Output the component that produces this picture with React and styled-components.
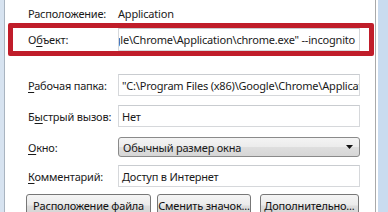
import React from "react";
import styled, { createGlobalStyle } from "styled-components";

const GlobalStyle = createGlobalStyle`
   html, body {
      margin: 0;
      padding: 0;
      background: #ffffff;
   }
   body {
      font-family: "Segoe UI", "Noto Sans", "DejaVu Sans", sans-serif;
      font-size: 11px;
      letter-spacing: -0.2px;
      color: #1a1a1a;
   }
`;

export default function App() {
   return (
      <>
         <GlobalStyle />
         <Window>
            <LeftEdge />
            <Panel>
               <Row $height={22} $top={2}>
                  <Label>Расположение:</Label>
                  <PlainValue>Application</PlainValue>
               </Row>

               <Highlight>
                  <Row $height={23}>
                     <Label>
                        О<u>б</u>ъект:
                     </Label>
                     <Field $alignEnd>
                        <span>"C:\Program Files (x86)\Google\Chrome\Application\chrome.exe" --incognito</span>
                     </Field>
                  </Row>
               </Highlight>

               <Row $height={22} $top={18}>
                  <Label>
                     <u>Р</u>абочая папка:
                  </Label>
                  <Field>
                     <span>"C:\Program Files (x86)\Google\Chrome\Application"</span>
                  </Field>
               </Row>

               <Row $height={22} $top={9}>
                  <Label>
                     Б<u>ы</u>стрый вызов:
                  </Label>
                  <Field>
                     <span>Нет</span>
                  </Field>
               </Row>

               <Row $height={20} $top={10}>
                  <Label>
                     <u>О</u>кно:
                  </Label>
                  <Select>
                     <span>Обычный размер окна</span>
                     <Arrow viewBox="0 0 7 4" width="7" height="4">
                        <path d="M0 0 H7 L3.5 4 Z" fill="#111" />
                     </Arrow>
                  </Select>
               </Row>

               <Row $height={22} $top={8}>
                  <Label>
                     <u>К</u>омментарий:
                  </Label>
                  <Field>
                     <span>Доступ в Интернет</span>
                  </Field>
               </Row>

               <Buttons>
                  <Button $width={125}>
                     <u>Р</u>асположение файла
                  </Button>
                  <Button $width={94}>
                     См<u>е</u>нить значок...
                  </Button>
                  <Button $width={99} $extra={3}>
                     <u>Д</u>ополнительно...
                  </Button>
               </Buttons>
            </Panel>
            <RightEdge />
         </Window>
      </>
   );
}

const Window = styled.div`
   display: flex;
   width: 388px;
   height: 212px;
   overflow: hidden;
`;

const LeftEdge = styled.div`
   width: 4px;
   flex-shrink: 0;
   background: #d7e3f0;
   border-right: 1px solid #a9b4c0;
`;

const RightEdge = styled.div`
   width: 12px;
   flex-shrink: 0;
   background: #c9dbef;
   border-left: 1px solid #a9a9a9;
   box-shadow: inset 2px 0 0 #ffffff;
`;

const Panel = styled.div`
   flex: 1;
   min-width: 0;
   display: flex;
   flex-direction: column;
   padding: 0 15px 0 23px;
   background: #ffffff;
`;

const Row = styled.div`
   display: grid;
   grid-template-columns: 90px minmax(0, 1fr);
   align-items: center;
   height: ${(p) => p.$height}px;
   margin-top: ${(p) => p.$top || 0}px;
   flex-shrink: 0;
`;

const Label = styled.div`
   white-space: nowrap;
   color: #1a1a1a;

   u {
      text-underline-offset: 2px;
   }
`;

const PlainValue = styled.div`
   white-space: nowrap;
`;

const Highlight = styled.div`
   margin: -1px -14px 0 -20px;
   padding: 0 9px 0 15px;
   border: 5px solid #c01d2a;
   border-radius: 2px;
   flex-shrink: 0;
`;

const Field = styled.div`
   display: flex;
   align-items: center;
   justify-content: ${(p) => (p.$alignEnd ? "flex-end" : "flex-start")};
   height: 100%;
   box-sizing: border-box;
   padding: 0 4px 0 3px;
   border: 1px solid #d6d8db;
   border-top-color: #c9ccd0;
   overflow: hidden;
   white-space: nowrap;
   background: #ffffff;

   span {
      flex-shrink: 0;
   }
`;

const Select = styled.div`
   display: flex;
   align-items: center;
   justify-content: space-between;
   height: 100%;
   box-sizing: border-box;
   padding: 0 6px 0 4px;
   border: 1px solid #8a8a8a;
   border-radius: 3px;
   background: linear-gradient(#f4f4f4 0%, #ececec 48%, #dedede 52%, #d6d6d6 100%);
   white-space: nowrap;
`;

const Arrow = styled.svg`
   display: block;
`;

const Buttons = styled.div`
   display: flex;
   margin: 7px 0 0 -2px;
   gap: 6px;
   flex-shrink: 0;
`;

const Button = styled.div`
   width: ${(p) => p.$width}px;
   height: 23px;
   flex-shrink: 0;
   margin-left: ${(p) => p.$extra || 0}px;
   box-sizing: border-box;
   display: flex;
   align-items: center;
   justify-content: center;
   border: 1px solid #777777;
   border-radius: 3px;
   background: linear-gradient(#f5f5f5 0%, #ebebeb 48%, #dddddd 52%, #d2d2d2 100%);
   white-space: nowrap;
   color: #111;

   u {
      text-underline-offset: 2px;
   }
`;
